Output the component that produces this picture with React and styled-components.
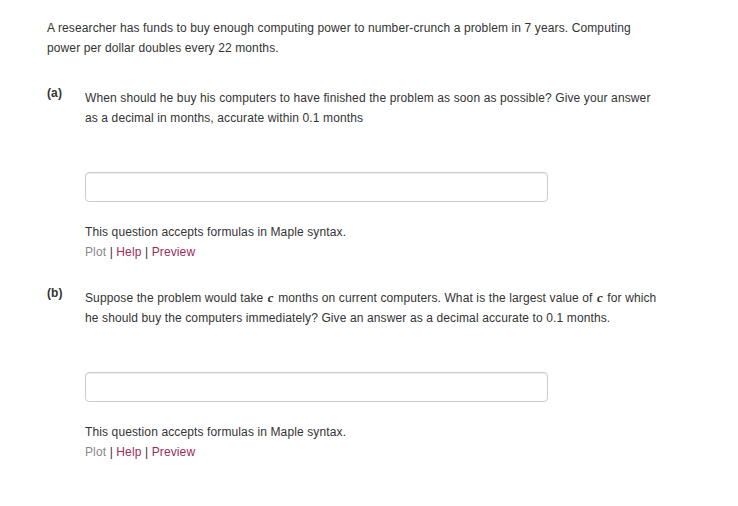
import React from "react";
import styled, { createGlobalStyle } from "styled-components";

const GlobalStyle = createGlobalStyle`
  body {
    margin: 0;
    background: #ffffff;
    font-family: "Liberation Sans", Arial, sans-serif;
    color: #333333;
  }
`;

const Page = styled.div`
  width: 613px;
  padding: 18px 0 0 47px;
  font-size: 12px;
  line-height: 20px;
  letter-spacing: 0.12px;
`;

const Intro = styled.p`
  margin: 0;
`;

const Part = styled.div`
  display: flex;
  margin-top: ${(p) => p.gap}px;
`;

const PartLabel = styled.div`
  width: 38px;
  flex-shrink: 0;
  font-weight: bold;
  line-height: 10px;
`;

const Body = styled.div`
  flex: 1;
`;

const Question = styled.p`
  margin: 0;
`;

const MathVar = styled.i`
  font-family: "Liberation Serif", "Times New Roman", serif;
  font-weight: bold;
  font-size: 13px;
  line-height: 0;
  margin: 0 1px;
`;

const AnswerInput = styled.input`
  display: block;
  box-sizing: border-box;
  width: 463px;
  height: 30px;
  margin-top: 44px;
  border: 1px solid #cccccc;
  border-radius: 4px;
  box-shadow: inset 0 1px 1px rgba(0, 0, 0, 0.075);
  outline: none;
`;

const Note = styled.div`
  margin-top: 20px;
`;

const Links = styled.div`
  color: #333333;
`;

const Link = styled.a`
  color: ${(p) => (p.muted ? "#888888" : "#9b2d5c")};
  text-decoration: none;
  cursor: pointer;
`;

const Answer = () => (
  <>
    <AnswerInput type="text" />
    <Note>This question accepts formulas in Maple syntax.</Note>
    <Links>
      <Link muted>Plot</Link> | <Link>Help</Link> | <Link>Preview</Link>
    </Links>
  </>
);

export default function App() {
  return (
    <>
      <GlobalStyle />
      <Page>
        <Intro>
          A researcher has funds to buy enough computing power to number-crunch a
          problem in 7 years. Computing power per dollar doubles every 22 months.
        </Intro>

        <Part gap={30}>
          <PartLabel>(a)</PartLabel>
          <Body>
            <Question>
              When should he buy his computers to have finished the problem as soon
              as possible? Give your answer as a decimal in months, accurate within
              0.1 months
            </Question>
            <Answer />
          </Body>
        </Part>

        <Part gap={26}>
          <PartLabel>(b)</PartLabel>
          <Body>
            <Question>
              Suppose the problem would take <MathVar>c</MathVar> months on current
              computers. What is the largest value of <MathVar>c</MathVar> for which
              he should buy the computers immediately? Give an answer as a decimal
              accurate to 0.1 months.
            </Question>
            <Answer />
          </Body>
        </Part>
      </Page>
    </>
  );
}
